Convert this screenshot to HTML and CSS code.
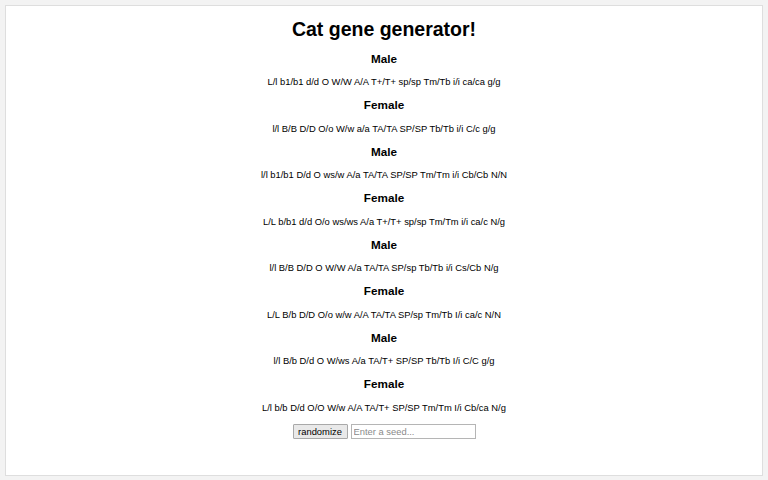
FILE: index.html
```html
<!DOCTYPE html>
<html>
<head>
<meta charset="utf-8">
<title>Cat gene generator!</title>
<link rel="stylesheet" href="styles.css">
</head>
<body>
<main class="page">
  <h1 class="title">Cat gene generator!</h1>
  <h3 class="sex">Male</h3>
  <p class="genes">L/l b1/b1 d/d O W/W A/A T+/T+ sp/sp Tm/Tb i/i ca/ca g/g</p>
  <h3 class="sex">Female</h3>
  <p class="genes">l/l B/B D/D O/o W/w a/a TA/TA SP/SP Tb/Tb i/i C/c g/g</p>
  <h3 class="sex">Male</h3>
  <p class="genes">l/l b1/b1 D/d O ws/w A/a TA/TA SP/SP Tm/Tm i/i Cb/Cb N/N</p>
  <h3 class="sex">Female</h3>
  <p class="genes">L/L b/b1 d/d O/o ws/ws A/a T+/T+ sp/sp Tm/Tm i/i ca/c N/g</p>
  <h3 class="sex">Male</h3>
  <p class="genes">l/l B/B D/D O W/W A/a TA/TA SP/sp Tb/Tb i/i Cs/Cb N/g</p>
  <h3 class="sex">Female</h3>
  <p class="genes">L/L B/b D/D O/o w/w A/A TA/TA SP/sp Tm/Tb I/i ca/c N/N</p>
  <h3 class="sex">Male</h3>
  <p class="genes">l/l B/b D/d O W/ws A/a TA/T+ SP/SP Tb/Tb I/i C/C g/g</p>
  <h3 class="sex">Female</h3>
  <p class="genes">L/l b/b D/d O/O W/w A/A TA/T+ SP/SP Tm/Tm I/i Cb/ca N/g</p>
  <form class="controls">
    <button type="button" class="btn">randomize</button>
    <input class="seed" type="text" placeholder="Enter a seed...">
  </form>
</main>
</body>
</html>
```
FILE: styles.css
```css
html, body {
  margin: 0;
  padding: 0;
}
body {
  background: #f3f3f3;
  padding: 5px;
  font-family: "Liberation Sans", Arial, sans-serif;
  color: #000;
}
.page {
  box-sizing: border-box;
  height: 471px;
  background: #fff;
  border: 1px solid #dedede;
  text-align: center;
  overflow: hidden;
}
.title {
  font-size: 19.5px;
  line-height: 22px;
  margin: 12px 0 11.5px;
  font-weight: bold;
}
.sex {
  font-size: 11.7px;
  line-height: 13.5px;
  margin: 11px 0;
  font-weight: bold;
}
.genes {
  font-size: 9.4px;
  line-height: 11px;
  margin: 11px 0;
}
.controls {
  display: flex;
  justify-content: center;
  align-items: center;
  gap: 3px;
  margin-top: 9.5px;
}
.btn {
  font-family: "Liberation Sans", Arial, sans-serif;
  font-size: 9.4px;
  height: 15px;
  width: 55px;
  padding: 0;
  background: #e9e9e9;
  border: 1px solid #a9a9a9;
  border-radius: 1px;
  color: #000;
}
.seed {
  font-family: "Liberation Sans", Arial, sans-serif;
  font-size: 9.4px;
  height: 15px;
  width: 125px;
  box-sizing: border-box;
  padding: 0 2px;
  border: 1px solid #b5b5b5;
  border-radius: 0;
  margin: 0;
}
.seed::placeholder {
  color: #8a8a8a;
}
```
